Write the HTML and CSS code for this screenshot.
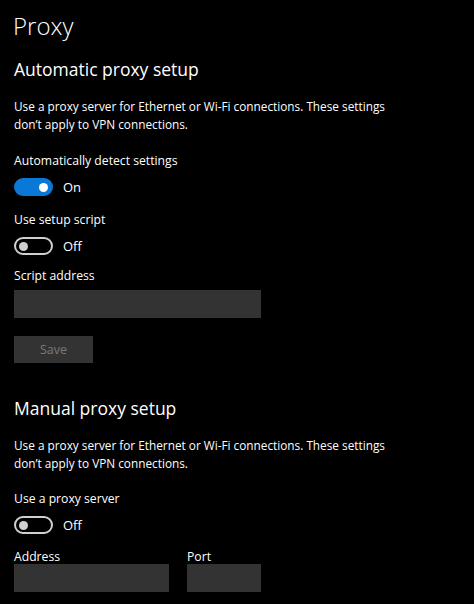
FILE: index.html
```html
<!DOCTYPE html>
<html>
<head>
<meta charset="utf-8">
<link rel="stylesheet" href="styles.css">
</head>
<body>
<main class="page">
  <h1 class="title">Proxy</h1>

  <h2 class="section-title">Automatic proxy setup</h2>
  <p class="desc">Use a proxy server for Ethernet or Wi-Fi connections. These settings<br>don’t apply to VPN connections.</p>

  <div class="label first">Automatically detect settings</div>
  <div class="toggle-row">
    <span class="toggle on"><span class="knob"></span></span>
    <span class="toggle-text">On</span>
  </div>

  <div class="label">Use setup script</div>
  <div class="toggle-row">
    <span class="toggle"><span class="knob"></span></span>
    <span class="toggle-text">Off</span>
  </div>

  <div class="label field-top">Script address</div>
  <div class="input wide"></div>

  <button class="btn">Save</button>

  <h2 class="section-title manual">Manual proxy setup</h2>
  <p class="desc">Use a proxy server for Ethernet or Wi-Fi connections. These settings<br>don’t apply to VPN connections.</p>

  <div class="label first2">Use a proxy server</div>
  <div class="toggle-row">
    <span class="toggle"><span class="knob"></span></span>
    <span class="toggle-text">Off</span>
  </div>

  <div class="fields">
    <div class="field">
      <div class="field-label">Address</div>
      <div class="input addr"></div>
    </div>
    <div class="field">
      <div class="field-label">Port</div>
      <div class="input port"></div>
    </div>
  </div>
</main>
</body>
</html>
```

FILE: styles.css
```css
html, body {
  margin: 0;
  padding: 0;
  background: #000;
}
body {
  font-family: "Open Sans", "Noto Sans", sans-serif;
  color: #fff;
  overflow: hidden;
}
.page {
  padding: 8px 0 0 14px;
}
.title {
  margin: 0 0 0 -1px;
  font-size: 24px;
  font-weight: 300;
  line-height: 36px;
}
.section-title {
  margin: 11px 0 0 0;
  font-size: 17.5px;
  font-weight: 400;
  line-height: 28px;
}
.section-title.manual {
  margin-top: 31px;
}
.desc {
  margin: 15px 0 0 0;
  font-size: 11.8px;
  line-height: 17.5px;
  white-space: nowrap;
}
.label {
  margin-top: 15px;
  font-size: 12.2px;
  line-height: 18px;
}
.label.first {
  margin-top: 19px;
}
.label.field-top {
  margin-top: 12px;
}
.label.first2 {
  margin-top: 18px;
}
.toggle-row {
  margin-top: 8px;
  display: flex;
  align-items: center;
  gap: 10px;
  height: 18px;
}
.toggle {
  box-sizing: border-box;
  width: 39px;
  height: 18px;
  border: 2px solid #d0d0d0;
  border-radius: 9px;
  display: flex;
  align-items: center;
  padding: 0 3px;
}
.toggle .knob {
  width: 9px;
  height: 9px;
  border-radius: 50%;
  background: #d0d0d0;
}
.toggle.on {
  background: #0a78d7;
  border-color: #0a78d7;
  justify-content: flex-end;
}
.toggle.on .knob {
  background: #fff;
}
.toggle-text {
  font-size: 13px;
  line-height: 18px;
}
.input {
  background: #333;
  height: 28px;
}
.input.wide {
  margin-top: 5px;
  width: 247px;
}
.btn {
  display: block;
  margin-top: 18px;
  width: 79px;
  height: 27px;
  border: 0;
  padding: 0;
  background: #333;
  color: #7a7a7a;
  font-family: inherit;
  font-size: 12.5px;
}
.fields {
  margin-top: 16px;
  display: flex;
  gap: 18px;
}
.field-label {
  font-size: 12.2px;
  line-height: 14px;
}
.input.addr {
  width: 155px;
}
.input.port {
  width: 74px;
}
```
